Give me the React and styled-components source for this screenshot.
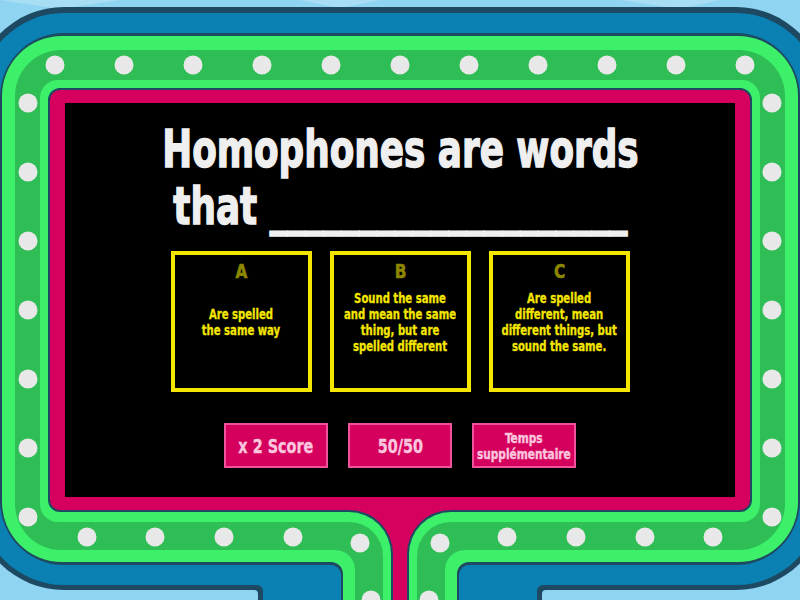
import React from "react";
import styled, { createGlobalStyle } from "styled-components";

const GlobalStyle = createGlobalStyle`
  html, body {
    margin: 0;
    padding: 0;
  }
  body {
    width: 800px;
    height: 600px;
    overflow: hidden;
    background: #8fd4f0;
    font-family: "DejaVu Sans Condensed", "Liberation Sans", sans-serif;
  }
`;

const NAVY = "#1d4a62";
const BLUE = "#0a80b3";
const LIGHT_GREEN = "#3df06a";
const DARK_GREEN = "#2fbd55";
const PINK = "#d6005f";

// each band of the cabinet, outermost first
const layers = [
	{ fill: NAVY, x0: -26, y0: 7, x1: 826, y1: 590, r: 90, w: 142, f: 4 },
	{ fill: BLUE, x0: -20, y0: 13, x1: 820, y1: 585, r: 84, w: 137, f: 6 },
	{ fill: NAVY, x0: 0, y0: 33, x1: 800, y1: 565, r: 64, w: 59, f: 10 },
	{ fill: LIGHT_GREEN, x0: 2, y0: 36, x1: 798, y1: 562, r: 60, w: 57, f: 12 },
	{ fill: DARK_GREEN, x0: 15, y0: 50, x1: 785, y1: 550, r: 46, w: 45, f: 20 },
	{ fill: LIGHT_GREEN, x0: 40, y0: 80, x1: 760, y1: 522, r: 18, w: 17, f: 34 },
	{ fill: NAVY, x0: 48, y0: 88, x1: 752, y1: 512, r: 12, w: 9, f: 42 },
	{ fill: PINK, x0: 50, y0: 90, x1: 750, y1: 510, r: 10, w: 7, f: 44 },
];

const layerPath = ({ x0, y0, x1, y1, r, w, f }) => {
	const L = 400 - w;
	const R = 400 + w;
	return `M${x0} ${y0 + r} A${r} ${r} 0 0 1 ${x0 + r} ${y0} L${x1 - r} ${y0} A${r} ${r} 0 0 1 ${x1} ${y0 + r} L${x1} ${y1 - r} A${r} ${r} 0 0 1 ${x1 - r} ${y1} L${R + f} ${y1} A${f} ${f} 0 0 0 ${R} ${y1 + f} L${R} 620 L${L} 620 L${L} ${y1 + f} A${f} ${f} 0 0 0 ${L - f} ${y1} L${x0 + r} ${y1} A${r} ${r} 0 0 1 ${x0} ${y1 - r} Z`;
};

const bulbs = [
	...Array.from({ length: 11 }, (_, k) => [55 + 69 * k, 65]),
	...Array.from({ length: 7 }, (_, k) => [28, 103 + 69 * k]),
	...Array.from({ length: 7 }, (_, k) => [772, 103 + 69 * k]),
	...[87, 155, 224, 293, 507, 576, 645, 713].map((x) => [x, 537]),
	[360, 543],
	[440, 543],
	[371, 600],
	[429, 600],
];

const choices = [
	{ letter: "A", lines: ["Are spelled", "the same way"] },
	{
		letter: "B",
		lines: ["Sound the same", "and mean the same", "thing, but are", "spelled different"],
	},
	{
		letter: "C",
		lines: ["Are spelled", "different, mean", "different things, but", "sound the same."],
	},
];

function CabinetFrame() {
	return (
		<FrameArt viewBox="0 0 800 600" aria-hidden="true">
			<rect width="800" height="600" fill="#8fd4f0" />
			<path d="M0 0 L120 0 L60 9 Z M300 0 L380 0 L340 8 Z M620 0 L720 0 L680 9 Z" fill="#a8def4" />
			{layers.map((layer, i) => (
				<path key={i} d={layerPath(layer)} fill={layer.fill} />
			))}
			{bulbs.map(([cx, cy], i) => (
				<circle key={i} cx={cx} cy={cy} r="9.5" fill="#e8e8e8" />
			))}
		</FrameArt>
	);
}

function App() {
	return (
		<>
			<GlobalStyle />
			<Stage>
				<CabinetFrame />
				<Screen>
					<Title>
						Homophones are words
						<br />
						that ____________________
					</Title>
					<Choices>
						{choices.map((c) => (
							<Choice key={c.letter}>
								<Letter>{c.letter}</Letter>
								<ChoiceText>
									<Narrow>
										{c.lines.map((line, i) => (
											<React.Fragment key={i}>
												{i > 0 && <br />}
												{line}
											</React.Fragment>
										))}
									</Narrow>
								</ChoiceText>
							</Choice>
						))}
					</Choices>
					<PowerUps>
						<PowerUp>
							<Narrow>x 2 Score</Narrow>
						</PowerUp>
						<PowerUp>
							<Narrow>50/50</Narrow>
						</PowerUp>
						<PowerUp $small>
							<Narrow $scale={0.84}>
								Temps
								<br />
								supplémentaire
							</Narrow>
						</PowerUp>
					</PowerUps>
				</Screen>
			</Stage>
		</>
	);
}

const Stage = styled.div`
	position: relative;
	width: 800px;
	height: 600px;
	overflow: hidden;
	box-sizing: border-box;
	padding: 103px 65px;
	background: #8fd4f0;
`;

const FrameArt = styled.svg`
	position: absolute;
	inset: 0;
	width: 800px;
	height: 600px;
	display: block;
`;

const Screen = styled.main`
	position: relative;
	height: 394px;
	box-sizing: border-box;
	padding-top: 18px;
	background: #000;
	display: flex;
	flex-direction: column;
	align-items: center;
`;

const Title = styled.h1`
	margin: 0;
	font-size: 51px;
	line-height: 57px;
	font-weight: 700;
	color: #efefef;
	-webkit-text-stroke: 1.4px #efefef;
	text-align: center;
	white-space: nowrap;
	transform: scaleX(0.78);
`;

// the game font is much narrower than what is installed
const Narrow = styled.span`
	display: inline-block;
	transform: scaleX(${(p) => p.$scale || 0.8});
`;

const Choices = styled.div`
	display: flex;
	gap: 18px;
	margin-top: 16px;
`;

const Choice = styled.div`
	width: 141px;
	height: 141px;
	box-sizing: border-box;
	border: 4px solid #f5e600;
	display: flex;
	flex-direction: column;

	&::after {
		content: "";
		flex: none;
		height: 27px;
	}
`;

const Letter = styled.div`
	flex: none;
	height: 27px;
	box-sizing: border-box;
	padding-top: 5px;
	font-size: 20px;
	line-height: 22px;
	font-weight: 700;
	color: #8d8700;
	-webkit-text-stroke: 0.6px #8d8700;
	text-align: center;
	transform: scaleX(0.85);
`;

const ChoiceText = styled.div`
	flex: 1;
	display: flex;
	align-items: center;
	justify-content: center;
	text-align: center;
	font-size: 14px;
	line-height: 16px;
	font-weight: 700;
	color: #f5e600;
	-webkit-text-stroke: 0.3px #f5e600;
	white-space: nowrap;
`;

const PowerUps = styled.div`
	display: flex;
	gap: 20px;
	margin-top: 31px;
`;

const PowerUp = styled.div`
	width: 104px;
	height: 45px;
	box-sizing: border-box;
	background: #d5005d;
	border: 2px solid #f0529b;
	color: #fbc6dd;
	-webkit-text-stroke: 0.4px #fbc6dd;
	font-weight: 700;
	font-size: ${(p) => (p.$small ? "14px" : "20px")};
	line-height: 16px;
	display: flex;
	align-items: center;
	justify-content: center;
	text-align: center;
	white-space: nowrap;
`;

export default App;
